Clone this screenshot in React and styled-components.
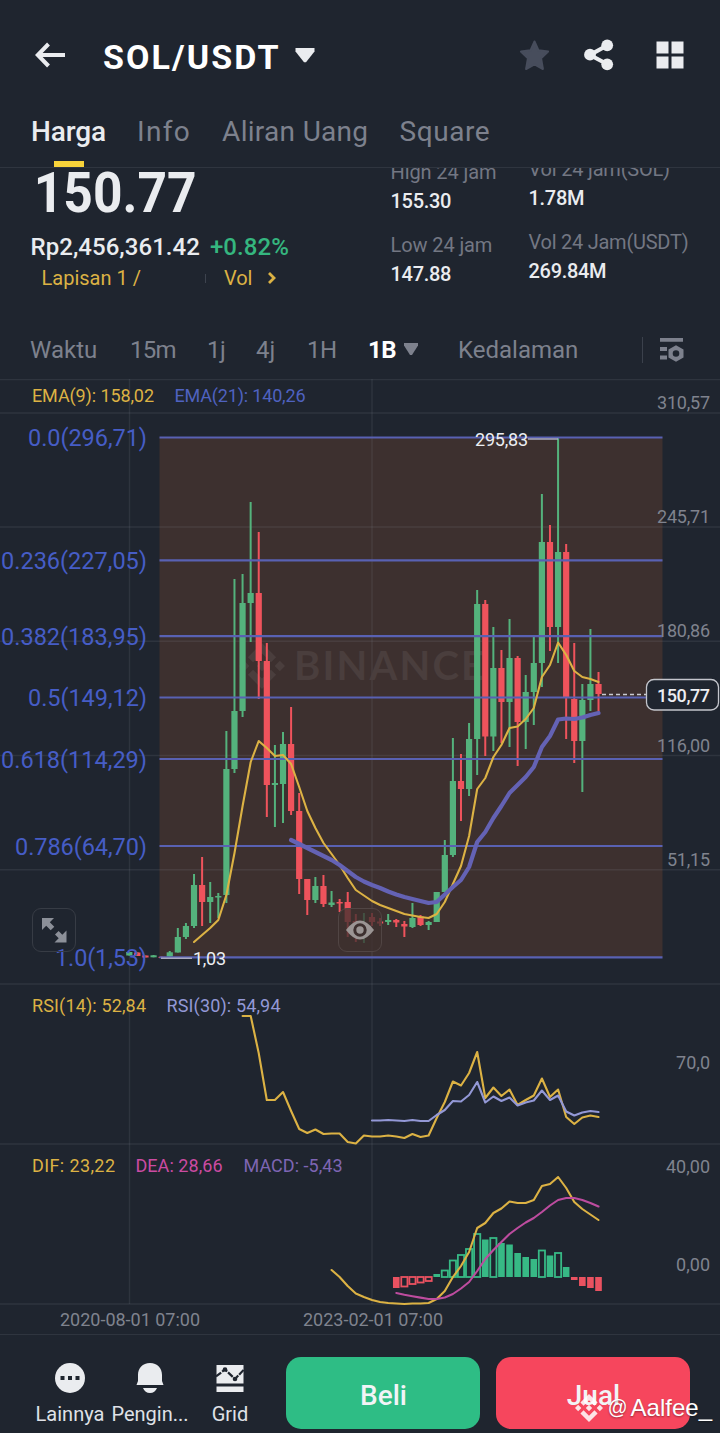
import React from "react";
import styled, { createGlobalStyle } from "styled-components";

const GREEN = "#54b27c";
const RED = "#ef535c";
const GOLD = "#dcb244";

const GlobalStyle = createGlobalStyle`
  * {
    box-sizing: border-box;
  }

  body {
    margin: 0;
    background: #1f252f;
    color: #eaecef;
    font-family: Roboto, "Noto Sans", sans-serif;
  }

  button {
    padding: 0;
    border: none;
    background: none;
    color: inherit;
    font: inherit;
  }
`;

/* monthly candles: [high, open/close top, open/close bottom, low, up] */
const candles = [
  [952, 952, 955.5, 955.5, 1],
  [952, 952.5, 956, 956, 0],
  [955.5, 955.5, 957.5, 957.5, 0],
  [955, 955.3, 957.3, 957.3, 1],
  [956.5, 956.8, 958, 958, 0],
  [951, 952.3, 956.7, 958, 1],
  [928, 937, 952.5, 952.5, 1],
  [923, 926, 937, 939, 1],
  [874, 885, 926, 928, 1],
  [857, 885, 902, 926, 0],
  [882, 897, 902, 923, 1],
  [893, 896, 897.5, 918, 1],
  [731, 769, 895, 903, 1],
  [579, 711, 769, 773, 1],
  [574, 603, 711, 717, 1],
  [502, 593, 603, 642, 1],
  [532, 593, 661, 699, 0],
  [643, 661, 785, 817, 0],
  [745, 783, 785, 827, 1],
  [732, 744, 784, 823, 1],
  [707, 744, 811, 815, 0],
  [793, 811, 879, 894, 0],
  [879, 879, 900, 915, 0],
  [877, 886, 900, 903, 1],
  [875, 886, 904, 907, 0],
  [891, 902.5, 905, 907, 1],
  [899, 902, 903.5, 912, 0],
  [892, 902, 922, 937, 0],
  [914, 921, 934, 942, 0],
  [913, 924, 934, 943, 1],
  [913, 917, 922, 926, 0],
  [918, 921.5, 923.5, 926, 0],
  [914, 920, 922, 925, 1],
  [919, 920, 922.5, 927, 0],
  [921, 924, 926.5, 937, 0],
  [903, 918, 927, 928, 1],
  [915, 916.5, 925, 926, 0],
  [921, 922, 925, 930, 1],
  [892, 892, 922, 922, 1],
  [840, 855, 892, 892, 1],
  [738, 781, 855, 857, 1],
  [754, 781, 789, 821, 0],
  [723, 739, 789, 796, 1],
  [590, 604, 739, 775, 1],
  [600, 604, 736.5, 756, 0],
  [627, 668, 736.5, 751, 1],
  [650, 668, 702, 743, 0],
  [619, 658, 702, 747, 1],
  [656, 658, 722, 766, 0],
  [675, 692, 722, 749, 1],
  [636, 663, 692, 725, 1],
  [494, 542, 663, 687, 1],
  [525, 542, 627, 651, 0],
  [438, 552, 627, 663, 1],
  [544, 552, 698, 739, 0],
  [643, 699, 741, 763, 0],
  [684, 700, 741, 792, 1],
  [629, 684, 700, 711, 1],
  [672, 684, 694, 711, 0],
];

/* histogram starts at candle 33: [edge, hollow] */
const macd = [
  [1288, 0], [1286.5, 1], [1284, 1], [1282.5, 1], [1281, 1],
  [1274, 0], [1270.5, 1], [1260.5, 1], [1255, 1], [1249, 1],
  [1234, 1], [1239.5, 0], [1238, 1], [1243, 0], [1244.5, 0],
  [1253, 0], [1257, 0], [1259, 0], [1250.5, 1], [1255.5, 0],
  [1253, 1], [1267, 0], [1280, 0], [1286, 0], [1288, 0], [1291, 0],
];

const candleX = (i) => 129.3 + i * 8.09;

const ema9 = [
  942, 935, 928, 920, 895, 853, 806, 762, 741, 748, 756, 755, 764, 787, 811,
  828, 843, 854, 865, 878, 890, 895.5, 901, 905, 908, 911, 914, 915.5, 917,
  918, 914, 902, 884, 866, 836, 789, 778, 757, 745, 728, 726.5, 719, 708, 677,
  665, 642.5, 655, 671, 677, 679, 682,
];
const ema21 = [
  840, 844, 848, 852, 856, 860, 865, 871, 877, 881.5, 885, 888, 891.5, 894.5,
  897, 899, 901, 903, 902, 894.5, 887, 880, 867, 842, 832, 818, 806, 793, 785,
  777, 767, 747, 736, 719.5, 718.5, 719, 717.5, 715, 713,
];
const rsi14 = [
  1016, 1016, 1053, 1100, 1100, 1092, 1111, 1129, 1133, 1129.5, 1134, 1133.5,
  1133.5, 1142, 1143.5, 1135.5, 1136.5, 1136.5, 1135.5, 1136.5, 1138, 1134,
  1137, 1135.5, 1118, 1102, 1081.5, 1085.5, 1073, 1052, 1098, 1087.5, 1096,
  1089.5, 1105, 1100, 1095.5, 1078.5, 1097, 1089.5, 1117, 1124, 1117.5, 1115.5,
  1117,
];
const rsi30 = [
  1120.5, 1120.5, 1120, 1120.5, 1121, 1120, 1121, 1121, 1115, 1110, 1101,
  1101.5, 1095, 1082, 1102.5, 1096.5, 1101, 1097.5, 1105.5, 1102.5, 1100.5,
  1090.5, 1100, 1095.5, 1111.5, 1115.5, 1112.5, 1111, 1112,
];
const dif = [
  1270, 1277, 1286, 1293.5, 1297, 1300, 1302, 1303, 1303.5, 1304, 1303.5,
  1303.5, 1303, 1299, 1291, 1277, 1266, 1252, 1228, 1223, 1213, 1208.5, 1201.5,
  1203, 1203, 1200, 1186, 1184, 1177, 1188, 1202, 1209, 1214.5, 1220,
];
const dea = [
  1293, 1294.8, 1296.2, 1297.6, 1299, 1299, 1297.5, 1294, 1288.5, 1282, 1271,
  1259, 1250, 1242, 1234, 1228, 1222.5, 1218, 1212, 1205.5, 1200, 1198, 1198,
  1200, 1203, 1206.5,
];

const fibs = [
  { label: "0.0(296,71)", x: 28, y: 437.5 },
  { label: "0.236(227,05)", x: 1, y: 560.3 },
  { label: "0.382(183,95)", x: 1, y: 636.2 },
  { label: "0.5(149,12)", x: 28, y: 697.5 },
  { label: "0.618(114,29)", x: 1, y: 759 },
  { label: "0.786(64,70)", x: 15, y: 846 },
  { label: "1.0(1,53)", x: 55, y: 957.3 },
];

const axis = [
  { text: "310,57", x: 657, y: 409 },
  { text: "245,71", x: 657, y: 523 },
  { text: "180,86", x: 657, y: 637 },
  { text: "116,00", x: 657, y: 752 },
  { text: "51,15", x: 667, y: 866 },
  { text: "70,0", x: 676, y: 1069 },
  { text: "40,00", x: 666, y: 1173 },
  { text: "0,00", x: 676, y: 1271 },
];

const legends = [
  { text: "EMA(9): 158,02", x: 32, y: 402, w: 122, color: GOLD },
  { text: "EMA(21): 140,26", x: 174.5, y: 402, w: 131, color: "#4f62c0" },
  { text: "RSI(14): 52,84", x: 32, y: 1012, w: 114, color: GOLD },
  { text: "RSI(30): 54,94", x: 166.5, y: 1012, w: 114, color: "#9398d6" },
  { text: "DIF: 23,22", x: 32, y: 1172, w: 83, color: GOLD },
  { text: "DEA: 28,66", x: 135.5, y: 1172, w: 87, color: "#cb4ba2" },
  { text: "MACD: -5,43", x: 243.5, y: 1172, w: 99, color: "#7e65b4" },
];

const tabs = [
  { name: "Harga", active: true, track: -0.1 },
  { name: "Info", track: 1.3 },
  { name: "Aliran Uang", track: 0.3 },
  { name: "Square", track: 0.6 },
];

const toPoints = (start, ys) =>
  ys.map((y, i) => `${candleX(start + i).toFixed(1)},${y}`).join(" ");

function BinanceMark(props) {
  return (
    <svg viewBox="0 0 126.6 126.6" fill="currentColor" {...props}>
      <path d="M38.7 53.2l24.6-24.6 24.6 24.6 14.3-14.3L63.3 0 24.4 38.9zM0 63.3L14.3 49l14.3 14.3-14.3 14.3zM38.7 73.4L63.3 98l24.6-24.6 14.3 14.3-38.9 38.9-38.9-38.9zM98 63.3L112.3 49l14.3 14.3-14.3 14.3zM77.8 63.3L63.3 48.8 48.8 63.3l14.5 14.5z" />
    </svg>
  );
}

function TopBar() {
  return (
    <Bar>
      <svg width="30" height="26" viewBox="0 0 30 26" fill="none" stroke="#eaecef" strokeWidth="4">
        <path d="M30 13H3M13.5 2L2.8 13l10.7 11" />
      </svg>
      <Pair>SOL/USDT</Pair>
      <svg width="20" height="15" viewBox="0 0 20 15" fill="#eaecef">
        <path d="M.5 0h19v3.500L11 14.200H9L.5 3.500z" />
      </svg>
      <Actions>
        <svg width="31" height="31" viewBox="0 0 31 31" fill="#474d5c" stroke="#474d5c" strokeWidth="2" strokeLinejoin="round">
          <path d="M15.5 1.5l4 8.8 9.6 1.3-7 6.700 1.800 10.700-8.400-4.600L7.100 29l1.800-10.700-7-6.700 9.600-1.300z" />
        </svg>
        <svg width="30" height="32" viewBox="0 0 30 32" fill="#eaecef">
          <path d="M23 6.500L6 16l17 9" fill="none" stroke="#eaecef" strokeWidth="4.200" />
          <circle cx="23.200" cy="6.300" r="5.900" />
          <circle cx="6" cy="15.700" r="5.900" />
          <circle cx="23.200" cy="25.300" r="5.900" />
        </svg>
        <svg width="28" height="28" viewBox="0 0 28 28" fill="#eaecef">
          <path d="M.5.5h12v12H.500zM15.500.5h12v12h-12zM.5 15.500h12v12H.500zM15.500 15.500h12v12h-12z" />
        </svg>
      </Actions>
    </Bar>
  );
}

function Stat({ label, value, track }) {
  return (
    <StatItem>
      <StatLabel $track={track}>{label}</StatLabel>
      <StatValue>{value}</StatValue>
    </StatItem>
  );
}

function Summary() {
  return (
    <SummaryArea>
      <PriceColumn>
        <Price>150.77</Price>
        <FiatRow>
          Rp2,456,361.42 <Change>+0.82%</Change>
        </FiatRow>
        <TagRow>
          <span>Lapisan 1 /</span>
          <TagDivider />
          <span>Vol</span>
          <svg width="8" height="12" viewBox="0 0 8 12" fill="none" stroke={GOLD} strokeWidth="2.800">
            <path d="M1 1l5 5-5 5" />
          </svg>
        </TagRow>
      </PriceColumn>
      <StatColumn $shift={-8}>
        <Stat label="High 24 jam" value="155.30" track={-0.1} />
        <Stat label="Low 24 jam" value="147.88" track={-0.1} />
      </StatColumn>
      <StatColumn $shift={-11}>
        <Stat label="Vol 24 jam(SOL)" value="1.78M" track={-0.2} />
        <Stat label="Vol 24 Jam(USDT)" value="269.84M" track={-0.25} />
      </StatColumn>
    </SummaryArea>
  );
}

function Intervals() {
  return (
    <IntervalRow>
      <Interval>Waktu</Interval>
      <Interval $track={-0.8}>15m</Interval>
      <Interval $track={-0.5}>1j</Interval>
      <Interval>4j</Interval>
      <Interval $track={-0.5}>1H</Interval>
      <Interval $active $track={-0.5}>
        1B
        <svg width="14" height="12" viewBox="0 0 14 12" fill="#7d818d">
          <path d="M0 0h14v2.500L8 12H6L0 2.500z" />
        </svg>
      </Interval>
      <Interval>Kedalaman</Interval>
      <IndicatorButton>
        <svg width="26" height="26" viewBox="0 0 26 26" fill="#7d818d">
          <path d="M1 1h23v3.800H1zM1 10h7v4H1zM1 18.500h7v4H1z" />
          <path fillRule="evenodd" d="M17 8.200l7.500 4.200v8L17 24.800l-7.500-4.400v-8zM17 13.200a3.300 3.300 0 100 6.600 3.300 3.300 0 000-6.600z" />
        </svg>
      </IndicatorButton>
    </IntervalRow>
  );
}

function Chart() {
  return (
    <ChartPane>
      <svg width="720" height="955" viewBox="0 379 720 955">
        <rect x="159.500" y="437.500" width="503" height="520" fill="#3d302f" />

        <g stroke="#8f98a8" strokeOpacity=".13" strokeWidth="1.400">
          {[379.5, 413, 527, 641.3, 755.5, 869.8, 984, 1144, 1304].map((y) => (
            <path key={y} d={`M0 ${y}H720`} />
          ))}
          <path d="M129.500 379V1304M372 379V1304" />
        </g>

        <g color="#4a3e3d" fill="#4a3e3d">
          <BinanceMark x="239" y="643" width="46" height="46" />
          <text x="294" y="680" fontSize="40" fontWeight="700" fontFamily="Lato, sans-serif" textLength="190">
            BINANCE
          </text>
        </g>

        {candles.map(([high, top, bottom, low, up], i) => (
          <g key={i} fill={up ? GREEN : RED}>
            <rect x={candleX(i) - 1} y={high} width="2" height={low - high} />
            <rect x={candleX(i) - 3.1} y={top} width="6.200" height={bottom - top} />
          </g>
        ))}

        <g stroke="#5961b3" strokeWidth="2.200">
          {fibs.map((f) => (
            <path key={f.y} d={`M159.500 ${f.y}H662.500`} />
          ))}
        </g>

        <g fill="none" strokeLinejoin="round" strokeLinecap="round">
          <polyline points={toPoints(8, ema9)} stroke={GOLD} strokeWidth="2.100" />
          <polyline points={toPoints(20, ema21)} stroke="#6462b4" strokeWidth="4.200" />
        </g>

        <g fill="#465dc6" fontSize="23.500">
          {fibs.map((f) => (
            <text key={f.y} x={f.x} y={f.y + 8.6} textLength={147 - f.x}>
              {f.label}
            </text>
          ))}
        </g>

        <g fill="#7f838e" fontSize="18">
          {axis.map((a) => (
            <text key={a.y} x={a.x} y={a.y} textLength={710 - a.x}>
              {a.text}
            </text>
          ))}
          <text x="60" y="1326" textLength="140">2020-08-01 07:00</text>
          <text x="303" y="1326" textLength="140">2023-02-01 07:00</text>
        </g>

        <g fill="#eceef2" fontSize="18">
          <path d="M528 439H558M161 958.200H192" stroke="#a9a9bf" strokeWidth="1.600" />
          <text x="475" y="446" textLength="53">295,83</text>
          <text x="193" y="965" textLength="33">1,03</text>
        </g>

        <path d="M602 694.500H646" stroke="#c9cad0" strokeWidth="1.300" strokeDasharray="4 3" />
        <rect x="646.500" y="679.500" width="72" height="30.500" rx="7.500" fill="#1f252f" stroke="#c3c5cc" strokeWidth="1.300" />
        <text x="657" y="701.500" fontSize="18" fontWeight="500" fill="#eceef2" textLength="53">150,77</text>

        {legends.map((l) => (
          <text key={l.text} x={l.x} y={l.y} fontSize="18" fill={l.color} textLength={l.w}>
            {l.text}
          </text>
        ))}

        {macd.map(([edge, hollow], i) => {
          const color = edge < 1277 ? "#37b985" : "#ea5261";
          const top = Math.min(edge, 1277);
          const height = Math.abs(edge - 1277);
          return (
            <rect
              key={i}
              x={candleX(33 + i) - (hollow ? 3.1 : 3.3)}
              y={top}
              width={hollow ? 6.2 : 6.6}
              height={height}
              fill={hollow ? "none" : color}
              stroke={hollow ? color : "none"}
              strokeWidth="1.800"
            />
          );
        })}

        <g fill="none" strokeWidth="2.100" strokeLinejoin="round" strokeLinecap="round">
          <polyline points={toPoints(14, rsi14)} stroke={GOLD} />
          <polyline points={toPoints(30, rsi30)} stroke="#9398d6" />
          <polyline points={toPoints(25, dif)} stroke={GOLD} />
          <polyline points={toPoints(33, dea)} stroke="#bd4c9f" />
        </g>
      </svg>

      <ChartButton $left={32}>
        <svg width="28" height="28" viewBox="0 0 28 28" fill="#8c9099">
          <path d="M2 2h12l-4.200 4.200 4.500 4.500-3.600 3.600-4.500-4.500L2 14zM26.500 26.500h-12l4.200-4.200-3.700-3.700 3.600-3.600 3.700 3.700 4.200-4.200z" />
        </svg>
      </ChartButton>
      <ChartButton $left={338} $tint>
        <svg width="30" height="22" viewBox="0 0 30 22">
          <path d="M1 11Q8 1.500 15 1.500T29 11Q22 20.500 15 20.500T1 11z" fill="#9b9594" />
          <circle cx="15" cy="11" r="5.200" fill="none" stroke="#3d302f" strokeWidth="3" />
        </svg>
      </ChartButton>
    </ChartPane>
  );
}

function Footer() {
  return (
    <FooterBar>
      <NavItem>
        <svg width="30" height="30" viewBox="0 0 30 30">
          <circle cx="15" cy="15" r="15" fill="#eaecef" />
          <path d="M5.500 13h4v4h-4zM13 13h4v4h-4zM20.500 13h4v4h-4z" fill="#1f252f" />
        </svg>
        Lainnya
      </NavItem>
      <NavItem>
        <svg width="30" height="30" viewBox="0 0 30 30" fill="#eaecef">
          <path d="M15 0C7.500 0 3 5 3 12v6l-1.500 4h27L27 18v-6C27 5 22.500 0 15 0zM8 25h14q-2 5-7 5t-7-5z" />
        </svg>
        Pengin...
      </NavItem>
      <NavItem>
        <svg width="28" height="30" viewBox="0 0 28 30">
          <path d="M.5 2h27v18.500H.500zM.5 23.500h27v5.500H.500z" fill="#eaecef" />
          <path d="M0 13.500l9-7 10 9.500 9-9.500" fill="none" stroke="#1f252f" strokeWidth="2.200" strokeDasharray="6.500 1.300" />
          <circle cx="9" cy="6.500" r="2.300" fill="#1f252f" />
          <circle cx="19" cy="16" r="2.300" fill="#1f252f" />
        </svg>
        Grid
      </NavItem>
      <TradeButton $color="#2ebd85">Beli</TradeButton>
      <TradeButton $color="#f6465d">Jual</TradeButton>
      <Signature>
        <BinanceMark width="28" height="28" />
        <At>@</At>
        <span>Aalfee_</span>
      </Signature>
    </FooterBar>
  );
}

function App() {
  return (
    <Page>
      <GlobalStyle />
      <Header>
        <TopBar />
        <Tabs>
          {tabs.map((tab) => (
            <Tab key={tab.name} $active={tab.active} $track={tab.track}>
              {tab.name}
            </Tab>
          ))}
        </Tabs>
      </Header>
      <Summary />
      <Intervals />
      <Chart />
      <Footer />
    </Page>
  );
}

const Page = styled.div`
  width: 720px;
  height: 1433px;
  display: flex;
  flex-direction: column;
  overflow: hidden;
  background: #1f252f;
`;

const Header = styled.header`
  flex: none;
  height: 168px;
  border-bottom: 1px solid #2f353f;
`;

const Bar = styled.div`
  height: 110px;
  padding: 0 36px 0 35px;
  display: flex;
  align-items: center;
`;

const Pair = styled.h1`
  margin: 3px 14px 0 38px;
  font-size: 34px;
  font-weight: 700;
  letter-spacing: 2.1px;
  color: #fff;
`;

const Actions = styled.div`
  margin-left: auto;
  display: flex;
  align-items: center;
  gap: 34px;

  svg:last-child {
    margin-left: 8px;
  }
`;

const Tabs = styled.nav`
  height: 57px;
  padding-left: 31px;
  display: flex;
  gap: 31px;
`;

const Tab = styled.button`
  display: flex;
  flex-direction: column;
  align-items: center;
  justify-content: space-between;
  font-size: 28px;
  line-height: 44px;
  font-weight: ${(p) => (p.$active ? 500 : 400)};
  letter-spacing: ${(p) => p.$track}px;
  color: ${(p) => (p.$active ? "#eaecef" : "#7d818d")};

  &::after {
    content: "";
    width: 30px;
    height: 6px;
    background: ${(p) => (p.$active ? "#f8d33a" : "transparent")};
  }
`;

const SummaryArea = styled.section`
  flex: none;
  height: 153px;
  padding-left: 30.5px;
  display: grid;
  grid-template-columns: 360px 138px 1fr;
  overflow: hidden;
`;

const PriceColumn = styled.div`
  white-space: nowrap;
`;

const Price = styled.div`
  padding-left: 3px;
  font-size: 56px;
  line-height: 51px;
  font-weight: 700;
  transform: scaleX(0.92);
  transform-origin: left;
`;

const FiatRow = styled.div`
  margin-top: 14px;
  font-size: 24px;
  line-height: 28px;
  font-weight: 500;
  letter-spacing: 0.05px;
`;

const Change = styled.span`
  margin-left: 4px;
  color: #35b67f;
`;

const TagRow = styled.div`
  margin-top: 4px;
  padding-left: 11px;
  display: flex;
  align-items: center;
  font-size: 20px;
  line-height: 26px;
  color: ${GOLD};

  svg {
    margin-left: 16px;
  }
`;

const TagDivider = styled.i`
  width: 1px;
  height: 9px;
  margin: 0 18px 0 64px;
  background: #3d434e;
`;

const StatColumn = styled.div`
  margin-top: ${(p) => p.$shift}px;
  display: flex;
  flex-direction: column;
  gap: 20px;
`;

const StatItem = styled.div`
  display: flex;
  flex-direction: column;
  gap: 5px;
  font-size: 20px;
  line-height: 24px;
  white-space: nowrap;
`;

const StatLabel = styled.span`
  letter-spacing: ${(p) => p.$track}px;
  color: #737783;
`;

const StatValue = styled.span`
  font-weight: 500;
  letter-spacing: -0.3px;
`;

const IntervalRow = styled.div`
  flex: none;
  height: 58px;
  padding: 0 35px 0 30px;
  display: grid;
  grid-template-columns: 100px 77px 49px 51px 61px 90px 1fr auto;
  align-items: center;
`;

const Interval = styled.button`
  display: flex;
  align-items: center;
  gap: 8px;
  font-size: 24px;
  font-weight: ${(p) => (p.$active ? 700 : 400)};
  letter-spacing: ${(p) => p.$track || 0}px;
  color: ${(p) => (p.$active ? "#fff" : "#7d818d")};

  svg {
    margin-top: -3px;
  }
`;

const IndicatorButton = styled.button`
  height: 26px;
  padding-left: 16px;
  border-left: 1px solid #3b414c;

  svg {
    display: block;
  }
`;

const ChartPane = styled.section`
  flex: none;
  position: relative;
  height: 955px;

  > svg {
    display: block;
  }
`;

const ChartButton = styled.button`
  position: absolute;
  left: ${(p) => p.$left}px;
  top: 529px;
  width: 44px;
  height: 44px;
  display: flex;
  align-items: center;
  justify-content: center;
  border: 1.5px solid ${(p) => (p.$tint ? "#514544" : "#373c45")};
  border-radius: 9px;
  background: ${(p) => (p.$tint ? "rgba(61, 48, 47, 0.75)" : "transparent")};
`;

const FooterBar = styled.footer`
  flex: none;
  position: relative;
  height: 99px;
  padding: 22px 30px 0;
  display: flex;
  border-top: 1px solid #2f353f;
`;

const NavItem = styled.button`
  width: 80px;
  height: 72px;
  padding-top: 6px;
  display: flex;
  flex-direction: column;
  align-items: center;
  gap: 9px;
  font-size: 20px;
  line-height: 24px;
  color: #dfe1e7;
`;

const TradeButton = styled.button`
  width: 194px;
  height: 72px;
  margin-left: 16px;
  border-radius: 15px;
  background: ${(p) => p.$color};
  font-size: 28px;
  font-weight: 500;
  color: #f1f4f6;
  padding: 4px 0 0 1px;
`;

const Signature = styled.div`
  position: absolute;
  right: 8px;
  top: 58px;
  display: flex;
  align-items: center;
  font-family: "Liberation Sans", Arial, sans-serif;
  font-size: 24px;
  line-height: 29px;
  color: #fff;
  text-shadow: 0 1px 2px rgba(0, 0, 0, 0.4);

  svg {
    opacity: 0.85;
  }
`;

const At = styled.span`
  margin: 0 3px 0 5px;
  font-size: 19.5px;
`;

export default App;
